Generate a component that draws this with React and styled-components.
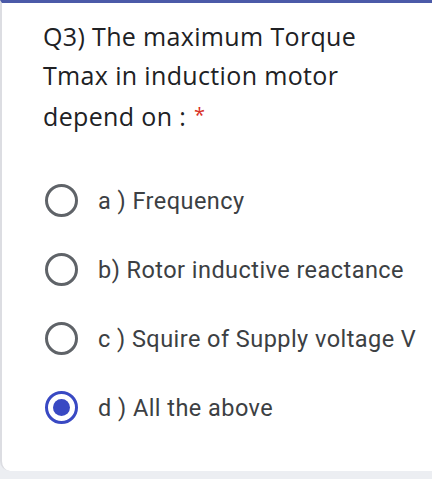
import styled, { createGlobalStyle } from "styled-components";

const GlobalStyle = createGlobalStyle`
  html, body {
    margin: 0;
    padding: 0;
    background: #eceef2;
  }
`;

const options = [
  { id: "a", label: "a ) Frequency" },
  { id: "b", label: "b) Rotor inductive reactance" },
  { id: "c", label: "c ) Squire of Supply voltage V" },
  { id: "d", label: "d ) All the above", checked: true },
];

const Card = styled.div`
  box-sizing: border-box;
  height: 471px;
  background: #fff;
  border-top: 3px solid #4b5aa8;
  border-left: 2px solid #dcdde2;
  border-bottom-left-radius: 10px;
  padding: 14px 10px 0 41px;
`;

const Question = styled.div`
  font-family: "Open Sans", "Liberation Sans", sans-serif;
  font-size: 25px;
  line-height: 39px;
  color: #202124;
  letter-spacing: 0.35px;
  width: 340px;
`;

const Star = styled.span`
  color: #d93025;
  font-size: 20px;
  margin-left: 8px;
  vertical-align: 4px;
`;

const List = styled.div`
  display: flex;
  flex-direction: column;
  gap: 34px;
  margin-top: 47px;
`;

const Row = styled.label`
  display: flex;
  align-items: center;
  gap: 20px;
  font-family: Roboto, "Liberation Sans", sans-serif;
  font-size: 23.5px;
  letter-spacing: 0.45px;
  color: #3c4043;
  height: 35px;
  white-space: nowrap;
`;

const Radio = styled.span`
  box-sizing: border-box;
  flex: none;
  width: 33px;
  height: 33px;
  border-radius: 50%;
  border: 3px solid ${(p) => (p.$checked ? "#3949c3" : "#5f6368")};
  display: flex;
  align-items: center;
  justify-content: center;
  margin-left: 2px;

  &::after {
    content: "";
    display: ${(p) => (p.$checked ? "block" : "none")};
    width: 17px;
    height: 17px;
    border-radius: 50%;
    background: #3949c3;
  }
`;

export default function App() {
  return (
    <>
      <GlobalStyle />
      <Card>
        <Question>
          Q3) The maximum Torque Tmax in induction motor depend on :
          <Star>*</Star>
        </Question>
        <List>
          {options.map((o) => (
            <Row key={o.id}>
              <Radio $checked={o.checked} />
              {o.label}
            </Row>
          ))}
        </List>
      </Card>
    </>
  );
}
